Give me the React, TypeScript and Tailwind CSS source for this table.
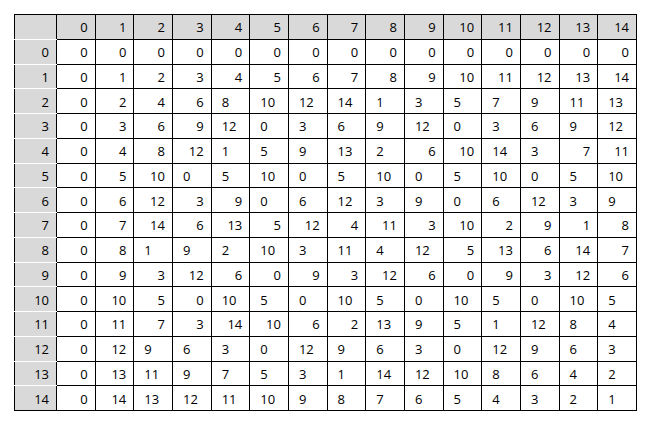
import React from "react";

const A = [
  "rrrrrrrrrrrrrrr",
  "rrrrrrrrrrrrrrr",
  "rrrrlllllllllll",
  "rrrrlllllllllll",
  "rrrrlllllrrllrr",
  "rrrllllllllllll",
  "rrrrrllllllllll",
  "rrrrrrrrrrrrrrr",
  "rrllllllllrrrrr",
  "rrrrrrrrrrrrrrr",
  "rrrrlllllllllll",
  "rrrrrrrrlllllll",
  "rrlllllllllllll",
  "rrlllllllllllll",
  "rrlllllllllllll",
];

const N = Array.from({ length: 15 }, (_, i) => i);

export default function App() {
  return (
    <div
      className="w-[654px] h-[423px] bg-white pl-[14px] pt-[14px]"
      style={{ fontFamily: '"Open Sans", "Liberation Sans", sans-serif' }}
    >
      <table className="w-[623px] h-[397px] table-fixed border-collapse text-[13px] leading-none text-black">
        <colgroup>
          <col className="w-[42px]" />
          {N.map((j) => (
            <col key={j} />
          ))}
        </colgroup>
        <tbody>
          <tr>
            <td className="bg-[#d9d9d9] border border-black border-b-white"></td>
            {N.map((j) => (
              <td
                key={j}
                className="bg-[#d9d9d9] border border-black text-right pr-[7px] pt-[2px]"
              >
                {j}
              </td>
            ))}
          </tr>
          {N.map((i) => (
            <tr key={i}>
              <td
                className={
                  "bg-[#d9d9d9] border border-black text-right pr-[7px] pt-[2px] " +
                  (i < 14 ? "border-b-white" : "")
                }
              >
                {i}
              </td>
              {N.map((j) => {
                const al = A[i][j];
                return (
                  <td
                    key={j}
                    className={
                      "border border-black pt-[2px] " +
                      (al === "r" ? "text-right pr-[7px]" : "text-left pl-[10px]")
                    }
                  >
                    {(i * j) % 15}
                  </td>
                );
              })}
            </tr>
          ))}
        </tbody>
      </table>
    </div>
  );
}
